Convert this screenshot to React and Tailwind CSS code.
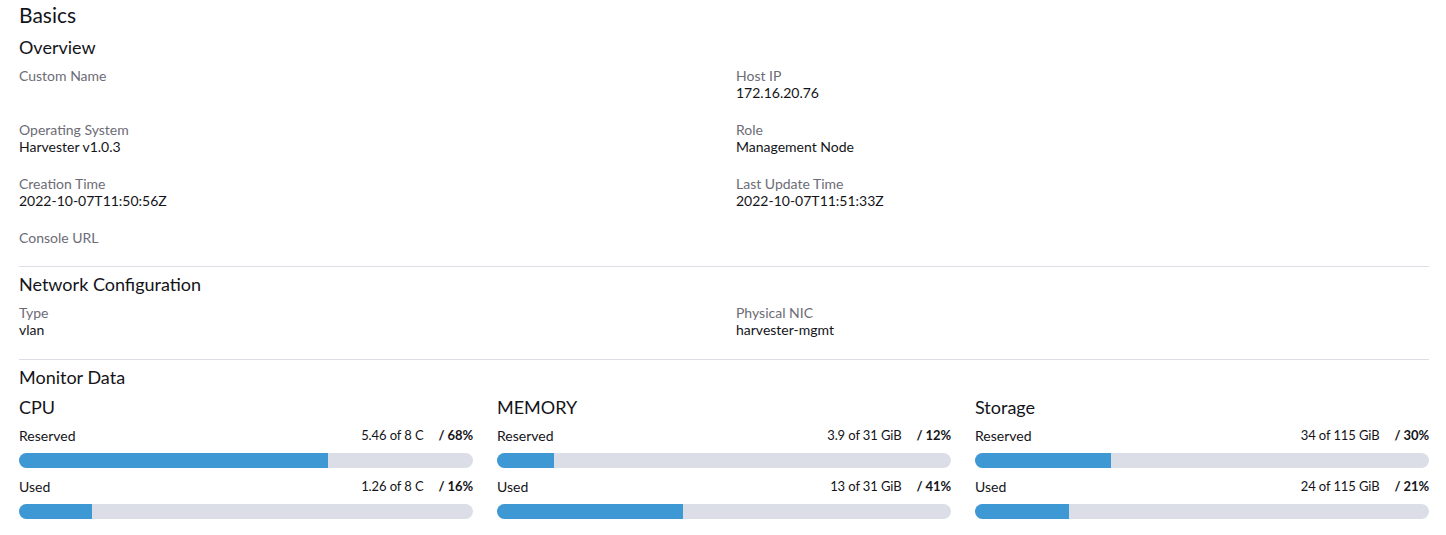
import React from 'react';

const overview = [
  { label: 'Custom Name', value: '' },
  { label: 'Host IP', value: '172.16.20.76' },
  { label: 'Operating System', value: 'Harvester v1.0.3' },
  { label: 'Role', value: 'Management Node' },
  { label: 'Creation Time', value: '2022-10-07T11:50:56Z' },
  { label: 'Last Update Time', value: '2022-10-07T11:51:33Z' },
  { label: 'Console URL', value: '' },
];

const network = [
  { label: 'Type', value: 'vlan' },
  { label: 'Physical NIC', value: 'harvester-mgmt' },
];

const monitors = [
  {
    title: 'CPU',
    rows: [
      { name: 'Reserved', amount: '5.46 of 8 C', pct: 68, label: 68 },
      { name: 'Used', amount: '1.26 of 8 C', pct: 16, label: 16 },
    ],
  },
  {
    title: 'MEMORY',
    rows: [
      { name: 'Reserved', amount: '3.9 of 31 GiB', pct: 12.5, label: 12 },
      { name: 'Used', amount: '13 of 31 GiB', pct: 41, label: 41 },
    ],
  },
  {
    title: 'Storage',
    rows: [
      { name: 'Reserved', amount: '34 of 115 GiB', pct: 30, label: 30 },
      { name: 'Used', amount: '24 of 115 GiB', pct: 20.7, label: 21 },
    ],
  },
];

const Field = ({ label, value, last }) => (
  <div className={last ? 'mb-[21px]' : 'mb-5'}>
    <div className="text-[14px] leading-[17px] text-[#6c6c76]">{label}</div>
    {value && <div className="text-[14px] leading-[17px] text-[#141419]">{value}</div>}
  </div>
);

const Heading = ({ children, className = '' }) => (
  <h3 className={`text-[18px] leading-[22px] text-[#141419] ${className}`}>{children}</h3>
);

const Bar = ({ pct }) => (
  <div className="h-[15px] w-full rounded-full bg-[#dcdee7] overflow-hidden">
    <div className="h-full bg-[#3d98d3]" style={{ width: `${pct}%` }} />
  </div>
);

const Gauge = ({ title, rows }) => (
  <div>
    <Heading>{title}</Heading>
    {rows.map((r, i) => (
      <div key={r.name} className={i === 0 ? 'mt-[9px]' : 'mt-[10px]'}>
        <div className="flex items-center justify-between text-[14px] leading-[17px] text-[#141419]">
          <span>{r.name}</span>
          <span className="text-[13px] tracking-[-0.1px]">
            {r.amount}
            <span className="ml-[15px] font-bold">/ {r.label}%</span>
          </span>
        </div>
        <div className="mt-[9px]">
          <Bar pct={r.pct} />
        </div>
      </div>
    ))}
  </div>
);

export default function App() {
  return (
    <div className="bg-white pl-[19px] pr-[17px] pt-[3px] pb-4 font-['Lato','Noto_Sans',sans-serif] text-[#141419]">
      <h2 className="text-[21px] leading-[24px]">Basics</h2>

      <Heading className="mt-[9px]">Overview</Heading>
      <div className="mt-[9px] grid grid-cols-2 gap-x-6">
        {overview.map((f) => (
          <Field key={f.label} {...f} />
        ))}
      </div>

      <div className="h-px bg-[#dcdee7]" />

      <Heading className="mt-[6px]">Network Configuration</Heading>
      <div className="mt-[9px] grid grid-cols-2 gap-x-6">
        {network.map((f) => (
          <Field key={f.label} {...f} last />
        ))}
      </div>

      <div className="h-px bg-[#dcdee7]" />

      <Heading className="mt-[6px]">Monitor Data</Heading>
      <div className="mt-[8px] grid grid-cols-3 gap-x-6">
        {monitors.map((m) => (
          <Gauge key={m.title} {...m} />
        ))}
      </div>
    </div>
  );
}
